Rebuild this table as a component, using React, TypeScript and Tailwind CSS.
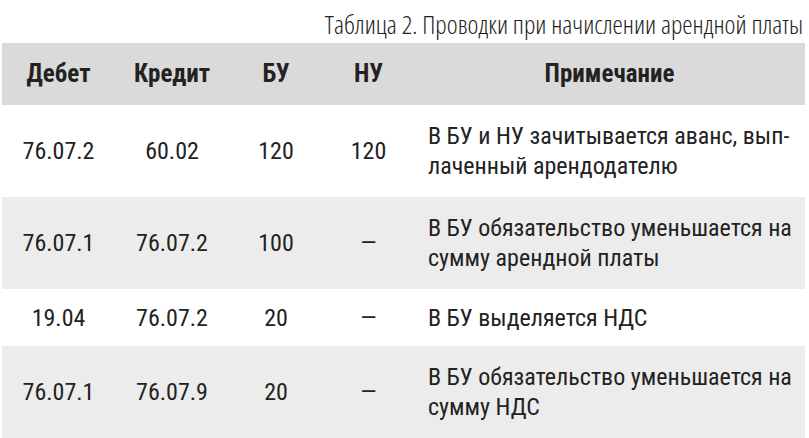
const rows = [
  { debit: "76.07.2", credit: "60.02", bu: "120", nu: "120", note: ["В БУ и НУ зачитывается аванс, вып-", "лаченный арендодателю"], tall: true, shade: false },
  { debit: "76.07.1", credit: "76.07.2", bu: "100", nu: "—", note: ["В БУ обязательство уменьшается на", "сумму арендной платы"], tall: true, shade: true },
  { debit: "19.04", credit: "76.07.2", bu: "20", nu: "—", note: ["В БУ выделяется НДС"], tall: false, shade: false },
  { debit: "76.07.1", credit: "76.07.9", bu: "20", nu: "—", note: ["В БУ обязательство уменьшается на", "сумму НДС"], tall: true, shade: true },
];

const cols = "grid grid-cols-[113px_114px_94px_91px_1fr]";

export default function App() {
  return (
    <div className="w-[809px] h-[438px] bg-white text-[#222] font-['Roboto_Condensed','Roboto',sans-serif] font-stretch-condensed overflow-hidden">
      <div className="h-[43px] flex items-center justify-end pr-[6px] pt-[5px] font-['Open_Sans',sans-serif] font-stretch-75% text-[26px] font-light leading-none">
        Таблица 2. Проводки при начислении арендной платы
      </div>
      <div className="ml-[2px] mr-[4px]">
        <div className={`${cols} h-[62px] bg-[#dadada] items-center text-[25px] font-bold`}>
          <div className="text-center">Дебет</div>
          <div className="text-center">Кредит</div>
          <div className="text-center">БУ</div>
          <div className="text-center">НУ</div>
          <div className="text-center">Примечание</div>
        </div>
        {rows.map((r, i) => (
          <div
            key={i}
            className={`${cols} items-center text-[24px] leading-[30px] ${r.tall ? "h-[92px]" : "h-[57px]"} ${r.shade ? "bg-[#ececec]" : "bg-white"}`}
          >
            <div className="text-center">{r.debit}</div>
            <div className="text-center">{r.credit}</div>
            <div className="text-center">{r.bu}</div>
            <div className="text-center">{r.nu}</div>
            <div className="pl-[14px]">
              {r.note.map((l, j) => (
                <div key={j} className="whitespace-nowrap">{l}</div>
              ))}
            </div>
          </div>
        ))}
      </div>
    </div>
  );
}
